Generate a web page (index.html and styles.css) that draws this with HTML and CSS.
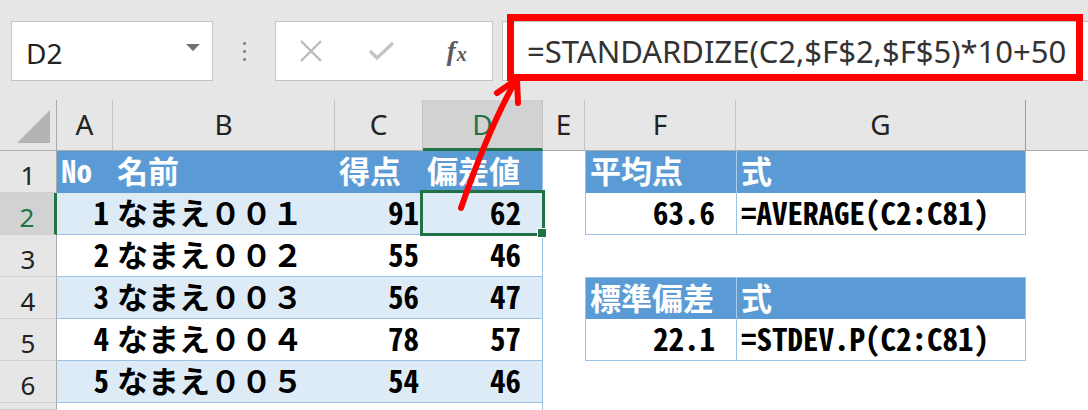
FILE: index.html
```html
<!DOCTYPE html>
<html lang="ja">
<head>
  <meta charset="UTF-8">
  <title>偏差値</title>
  <link rel="stylesheet" href="styles.css">
</head>
<body>

<div class="toolbar">
  <div class="namebox"><span class="ref">D2</span><span class="caret"></span></div>
  <div class="grip"><i></i><i></i><i></i></div>
  <div class="btnbox">
    <span class="slot">
      <svg width="24" height="22" viewBox="0 0 24 22"><path d="M2 1 L22 21 M22 1 L2 21" stroke="#bcbcbc" stroke-width="2.4" fill="none"/></svg>
    </span>
    <span class="slot">
      <svg width="28" height="20" viewBox="0 0 28 20"><polyline points="2,10 9,17 25,2" stroke="#c4c4c4" stroke-width="3.4" fill="none"/></svg>
    </span>
    <span class="slot fx"><i>f</i><i class="sub">x</i></span>
  </div>
  <div class="fbar">
    <span class="formula">=STANDARDIZE(C2,$F$2,$F$5)*10+50</span>
    <div class="mark"></div>
  </div>
</div>

<div class="sheet">
  <!-- column headers -->
  <div class="corner"><span class="tri"></span></div>
  <div class="ch">A</div>
  <div class="ch">B</div>
  <div class="ch">C</div>
  <div class="ch sel">D</div>
  <div class="ch">E</div>
  <div class="ch">F</div>
  <div class="ch">G</div>
  <div class="ch edge"></div>

  <!-- row 1 -->
  <div class="rh">1</div>
  <div class="c th">No</div>
  <div class="c th">名前</div>
  <div class="c th">得点</div>
  <div class="c th rb">偏差値</div>
  <div class="c"></div>
  <div class="c th bl">平均点</div>
  <div class="c th split br">式</div>
  <div class="c"></div>

  <!-- row 2 -->
  <div class="rh sel">2</div>
  <div class="c band ln num">1</div>
  <div class="c band ln fw">なまえ００１</div>
  <div class="c band ln num">91</div>
  <div class="c band ln num rb pad cur">62</div>
  <div class="c"></div>
  <div class="c bl bb num pad">63.6</div>
  <div class="c bl br bb">=AVERAGE(C2:C81)</div>
  <div class="c"></div>

  <!-- row 3 -->
  <div class="rh">3</div>
  <div class="c ln num">2</div>
  <div class="c ln fw">なまえ００２</div>
  <div class="c ln num">55</div>
  <div class="c ln num rb pad">46</div>
  <div class="c"></div>
  <div class="c"></div>
  <div class="c"></div>
  <div class="c"></div>

  <!-- row 4 -->
  <div class="rh">4</div>
  <div class="c band ln num">3</div>
  <div class="c band ln fw">なまえ００３</div>
  <div class="c band ln num">56</div>
  <div class="c band ln num rb pad">47</div>
  <div class="c"></div>
  <div class="c th bl bt">標準偏差</div>
  <div class="c th split br bt">式</div>
  <div class="c"></div>

  <!-- row 5 -->
  <div class="rh">5</div>
  <div class="c ln num">4</div>
  <div class="c ln fw">なまえ００４</div>
  <div class="c ln num">78</div>
  <div class="c ln num rb pad">57</div>
  <div class="c"></div>
  <div class="c bl bb num pad">22.1</div>
  <div class="c bl br bb">=STDEV.P(C2:C81)</div>
  <div class="c"></div>

  <!-- row 6 -->
  <div class="rh">6</div>
  <div class="c band ln num">5</div>
  <div class="c band ln fw">なまえ００５</div>
  <div class="c band ln num">54</div>
  <div class="c band ln num rb pad">46</div>
  <div class="c"></div>
  <div class="c"></div>
  <div class="c"></div>
  <div class="c"></div>

  <!-- row 7, cut off by the window -->
  <div class="rh"></div>
  <div class="c"></div>
  <div class="c"></div>
  <div class="c"></div>
  <div class="c rb"></div>
  <div class="c"></div>
  <div class="c"></div>
  <div class="c"></div>
  <div class="c"></div>
</div>

<svg class="arrow" width="1088" height="410" viewBox="0 0 1088 410">
  <path d="M461 208 Q488 130 516 80" stroke="#ff0000" stroke-width="6" fill="none" stroke-linecap="round"/>
  <polyline points="497,93 517,79 518,103" stroke="#ff0000" stroke-width="6" fill="none" stroke-linecap="round" stroke-linejoin="round"/>
</svg>

</body>
</html>
```

FILE: styles.css
```css
body { margin: 0; width: 1088px; height: 410px; overflow: hidden; background: #fff; font-family: "Noto Sans", sans-serif; position: relative; }

/* formula bar */
.toolbar { display: flex; align-items: flex-start; height: 100px; box-sizing: border-box; padding: 21px 0 0 11px; background: #e6e6e6; }
.namebox { width: 202px; height: 60px; box-sizing: border-box; background: #fff; border: 1px solid #c4c4c4; display: flex; align-items: center; justify-content: space-between; padding: 0 12px 0 14px; }
.ref { font-size: 28px; color: #222; margin-top: 4px; }
.caret { width: 0; height: 0; border-left: 7px solid transparent; border-right: 7px solid transparent; border-top: 7px solid #707070; margin-top: -8px; }
.grip { width: 62px; height: 60px; display: flex; flex-direction: column; align-items: center; justify-content: center; gap: 5px; }
.grip i { width: 3px; height: 3px; background: #8a8a8a; border-radius: 1px; }
.btnbox { width: 218px; height: 60px; box-sizing: border-box; background: #fff; border: 1px solid #c4c4c4; display: flex; align-items: center; }
.slot { flex: 1; display: flex; justify-content: center; align-items: center; }
.slot svg { display: block; }
.fx { font-family: "Liberation Serif", serif; font-weight: bold; color: #5a5a5a; padding-left: 4px; }
.fx i { font-size: 27px; }
.fx .sub { font-size: 20px; margin-left: 1px; margin-top: 6px; }
.fbar { flex: 1; height: 60px; margin: 0 -10px 0 9px; box-sizing: border-box; background: #fff; border: 1px solid #c4c4c4; position: relative; }
.formula { display: block; padding-left: 24px; font-size: 31px; line-height: 58px; color: #333; white-space: nowrap; }
.mark { position: absolute; left: 4px; top: -8px; width: 576px; height: 67px; box-sizing: border-box; border: 7px solid #ff0000; }

/* grid */
.sheet { display: grid; grid-template-columns: 57px 56px 222px 88px 120px 42px 151px 290px 1fr; grid-template-rows: 51px repeat(6, 42px) 7px; }
.sheet > div { box-sizing: border-box; }
.corner { background: #e6e6e6; border-right: 1px solid #ababab; border-bottom: 1px solid #ababab; display: flex; justify-content: flex-end; align-items: flex-end; padding: 0 6px 7px 0; }
.tri { width: 0; height: 0; border-left: 33px solid transparent; border-bottom: 33px solid #b4b4b4; }
.ch { background: #e6e6e6; border-right: 1px solid #c2c2c2; border-bottom: 1px solid #ababab; text-align: center; font-size: 28px; line-height: 48px; color: #222; }
.ch.sel { background: #d2d2d2; color: #217346; border-bottom: 3px solid #217346; }
.ch.edge { border-right: none; }
.sheet > .ch:nth-child(8) { border-right-color: #9a9a9a; }
.rh { background: #e6e6e6; border-right: 1px solid #ababab; border-bottom: 1px solid #cfcfcf; text-align: center; font-size: 26px; line-height: 48px; color: #222; overflow: hidden; }
.rh.sel { background: #d2d2d2; color: #217346; border-right: 3px solid #217346; }

/* cells: half-width latin, full-width kana and digits */
.c { font-family: "Noto Sans Mono CJK JP", "Noto Sans CJK JP", sans-serif; font-feature-settings: "hwid" 1; font-weight: 700; font-size: 31px; line-height: 37px; color: #000; padding: 0 4px; white-space: nowrap; }
.c.fw { font-feature-settings: normal; }
.th { background: #5b9bd5; color: #fff; }
.band { background: #ddebf7; }
.ln { border-bottom: 1px solid #9bc2e6; }
.rb { border-right: 1px solid #9bc2e6; }
.num { text-align: right; }
.pad { padding-right: 21px; }

/* small summary tables */
.bl { border-left: 1px solid #9bc2e6; }
.br { border-right: 1px solid #9bc2e6; }
.bb { border-bottom: 1px solid #9bc2e6; }
.bt { border-top: 1px solid #9bc2e6; }
.th.split { border-left: 1px solid #a9cbee; }

/* active cell */
.cur { position: relative; }
.cur::after { content: ""; position: absolute; left: -3px; top: -3px; right: -3px; bottom: -2px; border: 3px solid #217346; }
.cur::before { content: ""; position: absolute; right: -5px; bottom: -4px; width: 8px; height: 8px; background: #217346; border: 1px solid #fff; z-index: 1; }

.arrow { position: absolute; left: 0; top: 0; pointer-events: none; }
```
